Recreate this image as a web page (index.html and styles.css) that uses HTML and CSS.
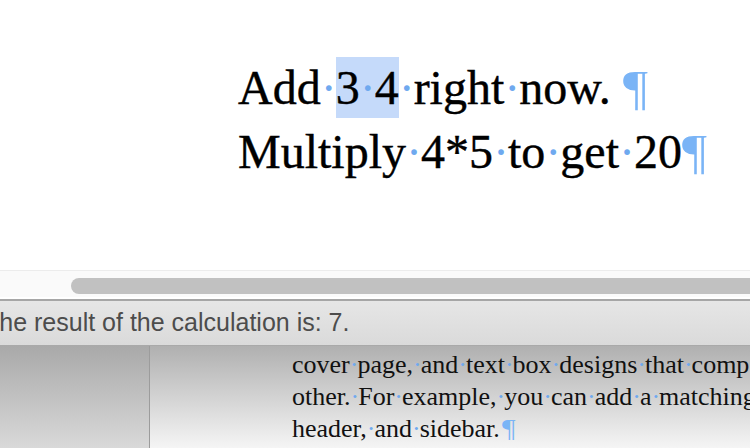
FILE: index.html
```html
<!DOCTYPE html>
<html lang="en">
<head>
    <meta charset="UTF-8">
    <title>Document</title>
    <link rel="stylesheet" href="styles.css">
</head>
<body>
<div class="editor">
    <div class="editor-page">
        <p class="editor-line">Add<span class="sp">·</span><span class="sel">3<span class="sp">·</span>4</span><span class="sp">·</span>right<span class="sp">·</span>now.<span class="pil pil-gap">¶</span></p>
        <p class="editor-line">Multiply<span class="sp">·</span>4*5<span class="sp">·</span>to<span class="sp">·</span>get<span class="sp">·</span>20<span class="pil">¶</span></p>
    </div>
    <div class="hscroll">
        <div class="hscroll-thumb"></div>
    </div>
</div>
<div class="status">
    <span class="status-text">The result of the calculation is: 7.</span>
</div>
<div class="lower">
    <div class="lower-side"></div>
    <div class="lower-doc">
        <p class="doc-line">cover<span class="sp">·</span>page,<span class="sp">·</span>and<span class="sp">·</span>text<span class="sp">·</span>box<span class="sp">·</span>designs<span class="sp">·</span>that<span class="sp">·</span>comp</p>
        <p class="doc-line">other.<span class="sp">·</span>For<span class="sp">·</span>example,<span class="sp">·</span>you<span class="sp">·</span>can<span class="sp">·</span>add<span class="sp">·</span>a<span class="sp">·</span>matching</p>
        <p class="doc-line">header,<span class="sp">·</span>and<span class="sp">·</span>sidebar.<span class="pil">¶</span></p>
    </div>
</div>
</body>
</html>
```
FILE: styles.css
```css
html, body{
    margin: 0;
    padding: 0;
}
body{
    width: 750px;
    height: 448px;
    overflow: hidden;
    background: #fff;
    font-family: "Liberation Serif", "DejaVu Serif", serif;
}

.editor{
    background: #fff;
}
.editor-page{
    height: 270px;
    box-sizing: border-box;
    padding: 56px 0 0 238px;
}
.editor-line{
    margin: 0;
    font-size: 48px;
    line-height: 64px;
    color: #000;
    white-space: nowrap;
    -webkit-text-stroke: 0.4px #000;
}
.sp{
    color: #6fa9ef;
    -webkit-text-stroke: 0;
    letter-spacing: -1px;
}
.pil{
    color: #7ab4f6;
    -webkit-text-stroke: 0;
    display: inline-block;
    transform: scaleX(1.15);
    transform-origin: left;
}
.pil-gap{
    margin-left: 12px;
}
.sel{
    background: #c5dafa;
    padding: 4px 0 4px;
}

/* horizontal scrollbar */
.hscroll{
    height: 29px;
    box-sizing: border-box;
    border-top: 1px solid #ececec;
    border-bottom: 2px solid #fff;
    background: #fafafa;
    padding: 7px 0 0 71px;
}
.hscroll-thumb{
    height: 16px;
    border-radius: 8px 0 0 8px;
    background: #c1c1c1;
}

.status{
    height: 47px;
    box-sizing: border-box;
    border-top: 2px solid #a6a6a6;
    border-bottom: 1px solid #a9a9a9;
    background: linear-gradient(#e6e6e6, #dadada);
    overflow: hidden;
    white-space: nowrap;
    font-family: "Liberation Sans", Arial, sans-serif;
    font-size: 25px;
    line-height: 28px;
    color: #4c4c4c;
    padding-top: 7px;
}
.status-text{
    display: block;
    margin-left: -16px;
}

.lower{
    display: flex;
    height: 102px;
}
.lower-side{
    width: 149px;
    background: linear-gradient(#a9a9a9, #d9d9d9);
    border-right: 1px solid #9c9c9c;
}
.lower-doc{
    flex: 1;
    background: linear-gradient(#b0b0b0, #f5f5f5);
    padding: 3px 0 0 142px;
    overflow: hidden;
    white-space: nowrap;
}
.doc-line{
    margin: 0;
    font-size: 26px;
    line-height: 32px;
    color: #111;
}
.doc-line .sp{
    letter-spacing: -1px;
}
.doc-line .pil{
    margin-left: 2px;
}
```
